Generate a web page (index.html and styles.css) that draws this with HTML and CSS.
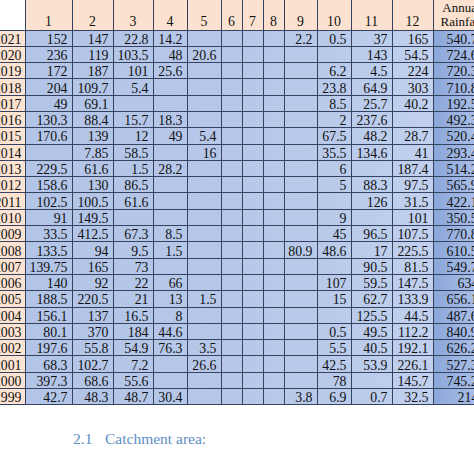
FILE: index.html
```html
<!DOCTYPE html>
<html>
<head>
<meta charset="utf-8">
<link rel="stylesheet" href="styles.css">
</head>
<body>
<div class="page">
<table class="rain">
<colgroup>
<col class="c-year"><col class="c1"><col class="c2"><col class="c3"><col class="c4"><col class="c5"><col class="c6"><col class="c7"><col class="c8"><col class="c9"><col class="c10"><col class="c11"><col class="c12"><col class="c-ann">
</colgroup>
<thead>
<tr><th class="corner"></th><th>1</th><th>2</th><th>3</th><th>4</th><th>5</th><th>6</th><th>7</th><th>8</th><th>9</th><th>10</th><th>11</th><th>12</th><th class="ann-h"><span class="ann-label">Annual<br>Rainfall</span></th></tr>
</thead>
<tbody>
<tr><th>2021</th><td>152</td><td>147</td><td>22.8</td><td>14.2</td><td></td><td></td><td></td><td></td><td>2.2</td><td>0.5</td><td>37</td><td>165</td><td class="ann">540.7</td></tr>
<tr><th>2020</th><td>236</td><td>119</td><td>103.5</td><td>48</td><td>20.6</td><td></td><td></td><td></td><td></td><td></td><td>143</td><td>54.5</td><td class="ann">724.6</td></tr>
<tr><th>2019</th><td>172</td><td>187</td><td>101</td><td>25.6</td><td></td><td></td><td></td><td></td><td></td><td>6.2</td><td>4.5</td><td>224</td><td class="ann">720.3</td></tr>
<tr><th>2018</th><td>204</td><td>109.7</td><td>5.4</td><td></td><td></td><td></td><td></td><td></td><td></td><td>23.8</td><td>64.9</td><td>303</td><td class="ann">710.8</td></tr>
<tr><th>2017</th><td>49</td><td>69.1</td><td></td><td></td><td></td><td></td><td></td><td></td><td></td><td>8.5</td><td>25.7</td><td>40.2</td><td class="ann">192.5</td></tr>
<tr><th>2016</th><td>130.3</td><td>88.4</td><td>15.7</td><td>18.3</td><td></td><td></td><td></td><td></td><td></td><td>2</td><td>237.6</td><td></td><td class="ann">492.3</td></tr>
<tr><th>2015</th><td>170.6</td><td>139</td><td>12</td><td>49</td><td>5.4</td><td></td><td></td><td></td><td></td><td>67.5</td><td>48.2</td><td>28.7</td><td class="ann">520.4</td></tr>
<tr><th>2014</th><td></td><td>7.85</td><td>58.5</td><td></td><td>16</td><td></td><td></td><td></td><td></td><td>35.5</td><td>134.6</td><td>41</td><td class="ann">293.45</td></tr>
<tr><th>2013</th><td>229.5</td><td>61.6</td><td>1.5</td><td>28.2</td><td></td><td></td><td></td><td></td><td></td><td>6</td><td></td><td>187.4</td><td class="ann">514.2</td></tr>
<tr><th>2012</th><td>158.6</td><td>130</td><td>86.5</td><td></td><td></td><td></td><td></td><td></td><td></td><td>5</td><td>88.3</td><td>97.5</td><td class="ann">565.9</td></tr>
<tr><th>2011</th><td>102.5</td><td>100.5</td><td>61.6</td><td></td><td></td><td></td><td></td><td></td><td></td><td></td><td>126</td><td>31.5</td><td class="ann">422.1</td></tr>
<tr><th>2010</th><td>91</td><td>149.5</td><td></td><td></td><td></td><td></td><td></td><td></td><td></td><td>9</td><td></td><td>101</td><td class="ann">350.5</td></tr>
<tr><th>2009</th><td>33.5</td><td>412.5</td><td>67.3</td><td>8.5</td><td></td><td></td><td></td><td></td><td></td><td>45</td><td>96.5</td><td>107.5</td><td class="ann">770.8</td></tr>
<tr><th>2008</th><td>133.5</td><td>94</td><td>9.5</td><td>1.5</td><td></td><td></td><td></td><td></td><td>80.9</td><td>48.6</td><td>17</td><td>225.5</td><td class="ann">610.5</td></tr>
<tr><th>2007</th><td>139.75</td><td>165</td><td>73</td><td></td><td></td><td></td><td></td><td></td><td></td><td></td><td>90.5</td><td>81.5</td><td class="ann">549.75</td></tr>
<tr><th>2006</th><td>140</td><td>92</td><td>22</td><td>66</td><td></td><td></td><td></td><td></td><td></td><td>107</td><td>59.5</td><td>147.5</td><td class="ann r">634</td></tr>
<tr><th>2005</th><td>188.5</td><td>220.5</td><td>21</td><td>13</td><td>1.5</td><td></td><td></td><td></td><td></td><td>15</td><td>62.7</td><td>133.9</td><td class="ann">656.1</td></tr>
<tr><th>2004</th><td>156.1</td><td>137</td><td>16.5</td><td>8</td><td></td><td></td><td></td><td></td><td></td><td></td><td>125.5</td><td>44.5</td><td class="ann">487.6</td></tr>
<tr><th>2003</th><td>80.1</td><td>370</td><td>184</td><td>44.6</td><td></td><td></td><td></td><td></td><td></td><td>0.5</td><td>49.5</td><td>112.2</td><td class="ann">840.9</td></tr>
<tr><th>2002</th><td>197.6</td><td>55.8</td><td>54.9</td><td>76.3</td><td>3.5</td><td></td><td></td><td></td><td></td><td>5.5</td><td>40.5</td><td>192.1</td><td class="ann">626.2</td></tr>
<tr><th>2001</th><td>68.3</td><td>102.7</td><td>7.2</td><td></td><td>26.6</td><td></td><td></td><td></td><td></td><td>42.5</td><td>53.9</td><td>226.1</td><td class="ann">527.3</td></tr>
<tr><th>2000</th><td>397.3</td><td>68.6</td><td>55.6</td><td></td><td></td><td></td><td></td><td></td><td></td><td>78</td><td></td><td>145.7</td><td class="ann">745.2</td></tr>
<tr><th>1999</th><td>42.7</td><td>48.3</td><td>48.7</td><td>30.4</td><td></td><td></td><td></td><td></td><td>3.8</td><td>6.9</td><td>0.7</td><td>32.5</td><td class="ann r">214</td></tr>
</tbody>
</table>
<h2 class="section"><span class="num">2.1</span>Catchment area:</h2>
</div>
</body>
</html>
```
FILE: styles.css
```css
html, body {
  margin: 0;
  padding: 0;
  background: #ffffff;
}
body {
  width: 474px;
  height: 474px;
  overflow: hidden;
}
.page {
  width: 474px;
  height: 474px;
  overflow: hidden;
  font-family: "Liberation Serif", "Times New Roman", serif;
  color: #111111;
}
.rain {
  margin-left: -10px;
  border-collapse: collapse;
  table-layout: fixed;
  width: 546px;
  font-size: 13.8px;
  background: linear-gradient(to right, #b2c4e7 0%, #b8c9ea 60%, #c4d3ef 90%);
}
.c-year { width: 35px; }
.c1 { width: 47px; }
.c2 { width: 41px; }
.c3 { width: 40px; }
.c4 { width: 34px; }
.c5 { width: 34px; }
.c6 { width: 21px; }
.c7 { width: 21px; }
.c8 { width: 21px; }
.c9 { width: 33px; }
.c10 { width: 34px; }
.c11 { width: 41px; }
.c12 { width: 41px; }
.c-ann { width: 103px; }
.rain th, .rain td {
  border: 1px solid #354260;
  padding: 0 4px 0 0;
  overflow: hidden;
  white-space: nowrap;
}
.rain thead tr {
  height: 30px;
}
.rain thead th {
  background: #fbe1cf;
  font-weight: normal;
  text-align: center;
  vertical-align: bottom;
  padding: 0 0 1px 0;
  line-height: 14px;
  border-top: none;
}
.rain thead th.corner {
  background: #ffffff;
  border-left: none;
}
.rain thead th.ann-h {
  text-align: left;
  padding: 0 0 1px 0;
}
.ann-label {
  display: inline-block;
  width: 56px;
  text-align: center;
  font-size: 13px;
  line-height: 13.5px;
}
.rain tbody tr {
  height: 16.3px;
}
.rain tbody th {
  background: #fde3d1;
  font-weight: normal;
  text-align: right;
  padding-right: 3px;
  padding-top: 2px;
  border-left: none;
  line-height: 13px;
}
.rain tbody td {
  text-align: right;
  line-height: 13px;
  padding-top: 2px;
}
.rain tbody td.ann {
  background: linear-gradient(to right, #8ba6da 0px, #a0b7e3 30px, #b4c6ec 60px);
  text-align: left;
  padding-left: 13px;
}
.rain tbody td.ann.r {
  padding-left: 24px;
}
.section {
  margin: 25px 0 0 73px;
  font-size: 15.5px;
  line-height: 18px;
  font-weight: normal;
  color: #5d8ec6;
}
.section .num {
  display: inline-block;
  width: 32px;
}
```
